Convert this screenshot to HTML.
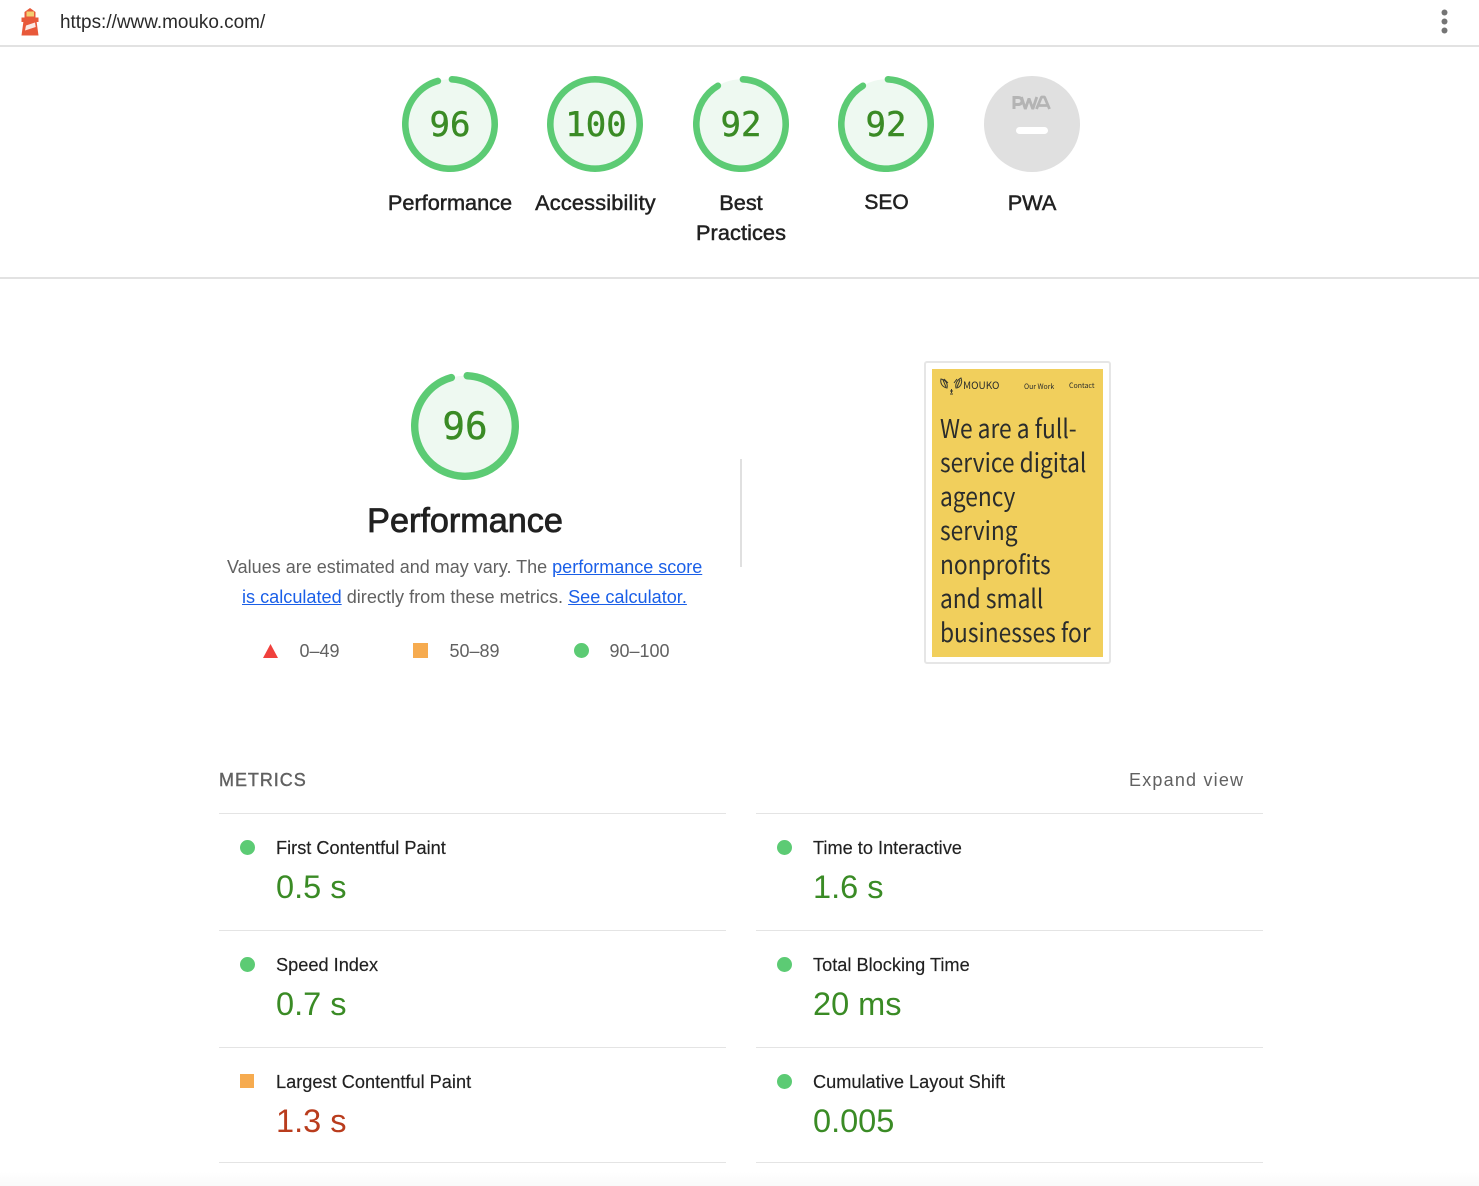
<!DOCTYPE html>
<html><head><meta charset="utf-8">
<style>
html,body{margin:0;padding:0;background:#fff}
body{width:1479px;height:1186px;position:relative;overflow:hidden;font-family:"Liberation Sans",sans-serif;color:#212121}
.a{position:absolute;white-space:nowrap}
.c{text-align:center;transform:translateX(-50%)}
.lab{font-size:21.7px;line-height:30px;-webkit-text-stroke:.5px #212121;color:#212121}
.hr{position:absolute;height:1px;background:#e4e4e4}
.mt{font-size:18.2px;line-height:22px;color:#212121;-webkit-text-stroke:.15px #212121}
.mv{font-size:32.5px;line-height:38px;color:#3a8b25}
.dot{position:absolute;width:15px;height:15px;border-radius:50%;background:#5ccb74}
svg{position:absolute;overflow:visible}
a{color:#1a5fe8;text-decoration:underline}
.num{font-family:"DejaVu Sans Mono",monospace;fill:#3a8b25;stroke:#3a8b25;stroke-width:.45px;text-anchor:middle}
.b{font-size:18px;line-height:30px;color:#616161}
</style></head><body>
<div class="hr" style="left:0;top:45px;width:1479px;height:2px;background:#e2e2e2"></div>

<svg style="left:19px;top:8px" width="22" height="28" viewBox="0 0 22 28">
<path d="M11 0L16.5 4V10H5.500V4Z" fill="#e8593a"/>
<rect x="7.500" y="3.500" width="7.500" height="5" fill="#f4cf71"/>
<rect x="2.500" y="9.500" width="17" height="4.500" fill="#e8593a"/>
<path d="M4.500 13H17.500L19.500 27.500H2.500Z" fill="#e8593a"/>
<path d="M7 17.500L16 14.500L16.700 19L6 22.500Z" fill="#fbe9e4"/>
</svg>
<div class="a" style="left:60px;top:12px;font-size:18.95px;line-height:22px;color:#2a2a2a">https://www.mouko.com/</div>
<svg style="left:1440px;top:9px" width="9" height="26"><circle cx="4.500" cy="3.500" r="3" fill="#757575"/><circle cx="4.500" cy="12.500" r="3" fill="#757575"/><circle cx="4.500" cy="21.500" r="3" fill="#757575"/></svg>

<svg style="left:402px;top:76px" width="96" height="96" viewBox="0 0 96 96"><circle cx="48" cy="48" r="44.700" fill="#eef9f1"/><circle cx="48" cy="48" r="44.700" fill="none" stroke="#5ccb74" stroke-width="6.600" stroke-linecap="round" pathLength="360" stroke-dasharray="341.700 360" transform="rotate(-87.500 48 48)"/><text class="num" x="48" y="60" font-size="34">96</text></svg>
<svg style="left:547px;top:76px" width="96" height="96" viewBox="0 0 96 96"><circle cx="48" cy="48" r="44.700" fill="#eef9f1" stroke="#5ccb74" stroke-width="6.600"/><text class="num" x="49" y="60" font-size="34">100</text></svg>
<svg style="left:693px;top:76px" width="96" height="96" viewBox="0 0 96 96"><circle cx="48" cy="48" r="44.700" fill="#eef9f1"/><circle cx="48" cy="48" r="44.700" fill="none" stroke="#5ccb74" stroke-width="6.600" stroke-linecap="round" pathLength="360" stroke-dasharray="326.300 360" transform="rotate(-87.500 48 48)"/><text class="num" x="48" y="60" font-size="34">92</text></svg>
<svg style="left:838px;top:76px" width="96" height="96" viewBox="0 0 96 96"><circle cx="48" cy="48" r="44.700" fill="#eef9f1"/><circle cx="48" cy="48" r="44.700" fill="none" stroke="#5ccb74" stroke-width="6.600" stroke-linecap="round" pathLength="360" stroke-dasharray="326.300 360" transform="rotate(-87.500 48 48)"/><text class="num" x="48" y="60" font-size="34">92</text></svg>
<svg style="left:984px;top:76px" width="96" height="96" viewBox="0 0 96 96"><circle cx="48" cy="48" r="48" fill="#e0e0e0"/><g style="filter:blur(.35px)"><path d="M30 33V21.500H34C36.700 21.500 38 23 38 25C38 27 36.700 28.500 34 28.500H30" fill="none" stroke="#b4b4b4" stroke-width="3"/><path d="M37.500 21L41.300 33L45 22.500L48.800 33L52.800 21" fill="none" stroke="#b4b4b4" stroke-width="2.800" stroke-linejoin="bevel"/><path d="M52.500 33L57.500 21H60.500L65.500 33M55 29.500H63" fill="none" stroke="#b4b4b4" stroke-width="2.800" stroke-linejoin="bevel"/></g><rect x="32" y="51" width="32" height="7" rx="3.500" fill="#fff"/></svg>

<div class="a c lab" style="left:450px;top:187.500px">Performance</div>
<div class="a c lab" style="left:595.500px;top:187.500px;letter-spacing:.2px">Accessibility</div>
<div class="a c lab" style="left:741px;top:187.500px">Best</div>
<div class="a c lab" style="left:741px;top:217.500px;letter-spacing:.1px">Practices</div>
<div class="a c lab" style="left:886.500px;top:187.500px;font-size:21px">SEO</div>
<div class="a c lab" style="left:1032px;top:187.500px">PWA</div>
<div class="hr" style="left:0;top:277px;width:1479px;height:2px;background:#e2e2e2"></div>

<svg style="left:411px;top:372px" width="108" height="108" viewBox="0 0 108 108"><circle cx="54" cy="54" r="50.300" fill="#eef9f1"/><circle cx="54" cy="54" r="50.300" fill="none" stroke="#5ccb74" stroke-width="7.400" stroke-linecap="round" pathLength="360" stroke-dasharray="341.700 360" transform="rotate(-87.500 54 54)"/><text class="num" x="54" y="67" font-size="37.500">96</text></svg>
<div class="a c" style="left:465px;top:501px;font-size:34.200px;line-height:40px;-webkit-text-stroke:.8px #212121">Performance</div>
<div class="a b" style="left:227px;top:552px">Values are estimated and may vary. The <a>performance score</a></div>
<div class="a b" style="left:242px;top:582px;font-size:18.13px"><a>is calculated</a> directly from these metrics. <a>See calculator.</a></div>
<svg style="left:263px;top:644px" width="15" height="14"><path d="M7.500 0L15 14H0Z" fill="#f0413d"/></svg>
<div class="a b" style="left:299.500px;top:636px">0–49</div>
<div class="a" style="left:413px;top:643px;width:15px;height:15px;background:#f6ab4f"></div>
<div class="a b" style="left:449.500px;top:636px">50–89</div>
<div class="dot" style="left:574px;top:643px"></div>
<div class="a b" style="left:609.500px;top:636px">90–100</div>
<div class="a" style="left:740px;top:459px;width:2px;height:108px;background:#e0e0e0"></div>

<div class="a" style="left:924px;top:361px;width:183px;height:299px;border:2px solid #e6e6e6;border-radius:3px;background:#fff"></div>
<div class="a" style="left:932px;top:369px;width:171px;height:288px;background:#f1cf5c;overflow:hidden;font-family:'Noto Sans CJK JP','Liberation Sans',sans-serif;color:#2a2c2c">
<svg style="left:8px;top:8px" width="24" height="20" viewBox="0 0 24 20" fill="none" stroke="#3a3a30" stroke-width="1"><path d="M1 2C0 6 2 10 7 11C8 7 6 3 1 2ZM3 3L6 10M4 2L8 6M21 1C17 3 15 7 16 11C20 11 23 6 21 1ZM20 3L17 10M17 2L14 6M10 14H13M11.500 12V16M10 17H13"/></svg>
<div class="a" style="left:31px;top:8px;font-size:10px;line-height:16px">MOUKO</div>
<div class="a" style="left:92px;top:9.500px;font-size:6.900px;line-height:14px">Our Work</div>
<div class="a" style="left:137px;top:9.500px;font-size:7px;line-height:14px">Contact</div>
<div class="a" style="left:8px;top:42px;font-size:26px;line-height:34px;transform:scaleX(.875);transform-origin:0 0">We are a full-<br>service digital<br>agency<br>serving<br>nonprofits<br>and small<br>businesses for</div>
</div>

<div class="a" style="left:219px;top:769px;font-size:18px;line-height:22px;color:#616161;letter-spacing:.95px;-webkit-text-stroke:.4px #616161">METRICS</div>
<div class="a" style="left:1129px;top:769px;font-size:18px;line-height:22px;color:#616161;letter-spacing:1.200px">Expand view</div>

<div class="hr" style="left:219px;top:813px;width:507px"></div><div class="hr" style="left:756px;top:813px;width:507px"></div>
<div class="hr" style="left:219px;top:930px;width:507px"></div><div class="hr" style="left:756px;top:930px;width:507px"></div>
<div class="hr" style="left:219px;top:1047px;width:507px"></div><div class="hr" style="left:756px;top:1047px;width:507px"></div>
<div class="hr" style="left:219px;top:1162px;width:507px"></div><div class="hr" style="left:756px;top:1162px;width:507px"></div>

<div class="dot" style="left:240px;top:840px"></div><div class="a mt" style="left:276px;top:837px">First Contentful Paint</div><div class="a mv" style="left:276px;top:868px">0.5 s</div>
<div class="dot" style="left:777px;top:840px"></div><div class="a mt" style="left:813px;top:837px">Time to Interactive</div><div class="a mv" style="left:813px;top:868px">1.6 s</div>
<div class="dot" style="left:240px;top:957px"></div><div class="a mt" style="left:276px;top:954px">Speed Index</div><div class="a mv" style="left:276px;top:985px">0.7 s</div>
<div class="dot" style="left:777px;top:957px"></div><div class="a mt" style="left:813px;top:954px">Total Blocking Time</div><div class="a mv" style="left:813px;top:985px">20 ms</div>
<div class="a" style="left:240px;top:1074px;width:14px;height:14px;background:#f6ab4f"></div><div class="a mt" style="left:276px;top:1071px">Largest Contentful Paint</div><div class="a mv" style="left:276px;top:1102px;color:#b93c1d">1.3 s</div>
<div class="dot" style="left:777px;top:1074px"></div><div class="a mt" style="left:813px;top:1071px">Cumulative Layout Shift</div><div class="a mv" style="left:813px;top:1102px">0.005</div>
<div class="a" style="left:0;top:1172px;width:1479px;height:14px;background:linear-gradient(#fff,#f9f9f9)"></div>
</body></html>
